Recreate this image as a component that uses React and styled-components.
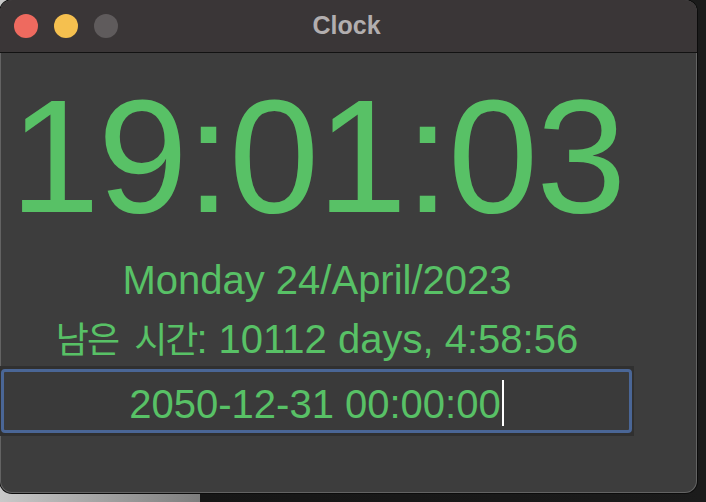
import React from "react";
import styled, { createGlobalStyle } from "styled-components";

const GlobalStyle = createGlobalStyle`
  html, body {
    margin: 0;
    padding: 0;
    width: 706px;
    height: 502px;
    overflow: hidden;
  }
  body {
    background: linear-gradient(to right, #c9c9c9 0px, #7d7d7d 200px, #161616 200px, #1b1b1b 706px);
    font-family: "Liberation Sans", Arial, "Noto Sans CJK KR", sans-serif;
  }
`;

const Desk = styled.div`
  width: 706px;
  height: 502px;
`;

const Window = styled.div`
  width: 697px;
  height: 493px;
  box-sizing: border-box;
  border-radius: 12px;
  overflow: hidden;
  background: #3d3d3d;
  display: flex;
  flex-direction: column;
  box-shadow: inset 0 0 0 1px rgba(255, 255, 255, 0.2), 0 0 0 1px #0c0c0c;
`;

const TitleBar = styled.div`
  height: 53px;
  flex: none;
  box-sizing: border-box;
  background: #3a3637;
  border-bottom: 1px solid #121212;
  display: grid;
  grid-template-columns: 1fr auto 1fr;
  align-items: center;
`;

const Lights = styled.div`
  display: flex;
  gap: 16px;
  padding-left: 14px;
  padding-bottom: 1px;
`;

const Light = styled.span`
  width: 24px;
  height: 24px;
  border-radius: 50%;
  background: ${(p) => p.$color};
`;

const Title = styled.div`
  font-family: "Liberation Sans", Arial, sans-serif;
  font-weight: 700;
  font-size: 25px;
  color: #b2aeaf;
  padding: 0 4px 1px 0;
`;

const Content = styled.div`
  width: 634px;
  display: flex;
  flex-direction: column;
  align-items: stretch;
  color: #58c166;
  text-align: center;
  white-space: nowrap;
`;

const BigTime = styled.div`
  font-size: 162px;
  line-height: 181px;
  letter-spacing: -2px;
  margin-top: 12px;
`;

const Line = styled.div`
  font-size: 40px;
  line-height: 45px;
  margin-top: ${(p) => p.$gap}px;
`;

const Hangul = styled.span`
  font-family: "Noto Sans CJK KR", sans-serif;
  font-size: 36px;
  letter-spacing: -2px;
  word-spacing: 10px;
`;

const EntryFrame = styled.div`
  margin-top: 4px;
  height: 70px;
  box-sizing: border-box;
  padding: 3px 2px 3px 1px;
  background: #303030;
`;

const Entry = styled.div`
  height: 100%;
  box-sizing: border-box;
  border: 3px solid #4a6696;
  border-radius: 4px;
  background: #3a3a3a;
  font-size: 40px;
  line-height: 45px;
  padding-top: 8px;
  text-align: center;
`;

const Caret = styled.span`
  display: inline-block;
  width: 2px;
  height: 46px;
  margin-left: 1px;
  background: #ffffff;
  vertical-align: -8px;
`;

export default function App() {
  return (
    <Desk>
      <GlobalStyle />
      <Window>
        <TitleBar>
          <Lights>
            <Light $color="#ee6a5f" />
            <Light $color="#f5c04f" />
            <Light $color="#5f5b5c" />
          </Lights>
          <Title>Clock</Title>
          <span />
        </TitleBar>
        <Content>
          <BigTime>19:01:03</BigTime>
          <Line $gap={12}>Monday 24/April/2023</Line>
          <Line $gap={12}>
            <Hangul>남은 시간</Hangul>: 10112 days, 4:58:56
          </Line>
          <EntryFrame>
            <Entry>
              2050-12-31 00:00:00
              <Caret />
            </Entry>
          </EntryFrame>
        </Content>
      </Window>
    </Desk>
  );
}
